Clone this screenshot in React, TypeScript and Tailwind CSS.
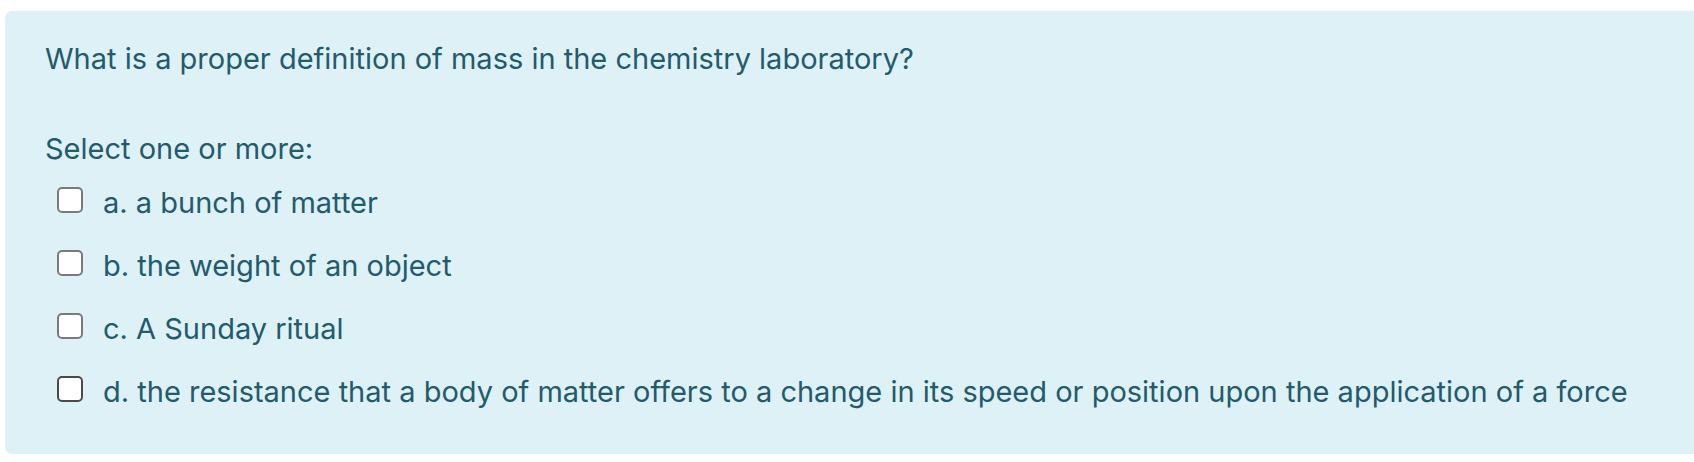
import React from "react";

const options = [
  { label: "a. a bunch of matter", dark: false },
  { label: "b. the weight of an object", dark: false },
  { label: "c. A Sunday ritual", dark: false },
  { label: "d. the resistance that a body of matter offers to a change in its speed or position upon the application of a force", dark: true },
];

export default function App() {
  return (
    <div className="w-[1694px] h-[462px] overflow-hidden bg-white" style={{ fontFamily: "Inter, 'Noto Sans', sans-serif" }}>
      <div className="ml-[5px] mt-[11px] w-[1720px] h-[443px] rounded-l-[7px] bg-[#def1f7] pl-[40px] pt-[25px] text-[#225b6b]">
        <p className="text-[29px] leading-[45px]">What is a proper definition of mass in the chemistry laboratory?</p>
        <p className="mt-[45px] text-[29px] leading-[45px]">Select one or more:</p>
        <div className="mt-[9px] flex flex-col gap-[18px] pl-[12px]">
          {options.map((o) => (
            <label key={o.label} className="flex items-start gap-[20px]">
              <span
                className={
                  o.dark
                    ? "mt-[7px] h-[26px] w-[26px] shrink-0 rounded-[5px] border-2 border-[#4a4a4a] bg-white"
                    : "mt-[7px] h-[26px] w-[26px] shrink-0 rounded-[5px] border-2 border-[#7a7a7a] bg-white"
                }
              />
              <span className="text-[29px] leading-[45px]">{o.label}</span>
            </label>
          ))}
        </div>
      </div>
    </div>
  );
}
